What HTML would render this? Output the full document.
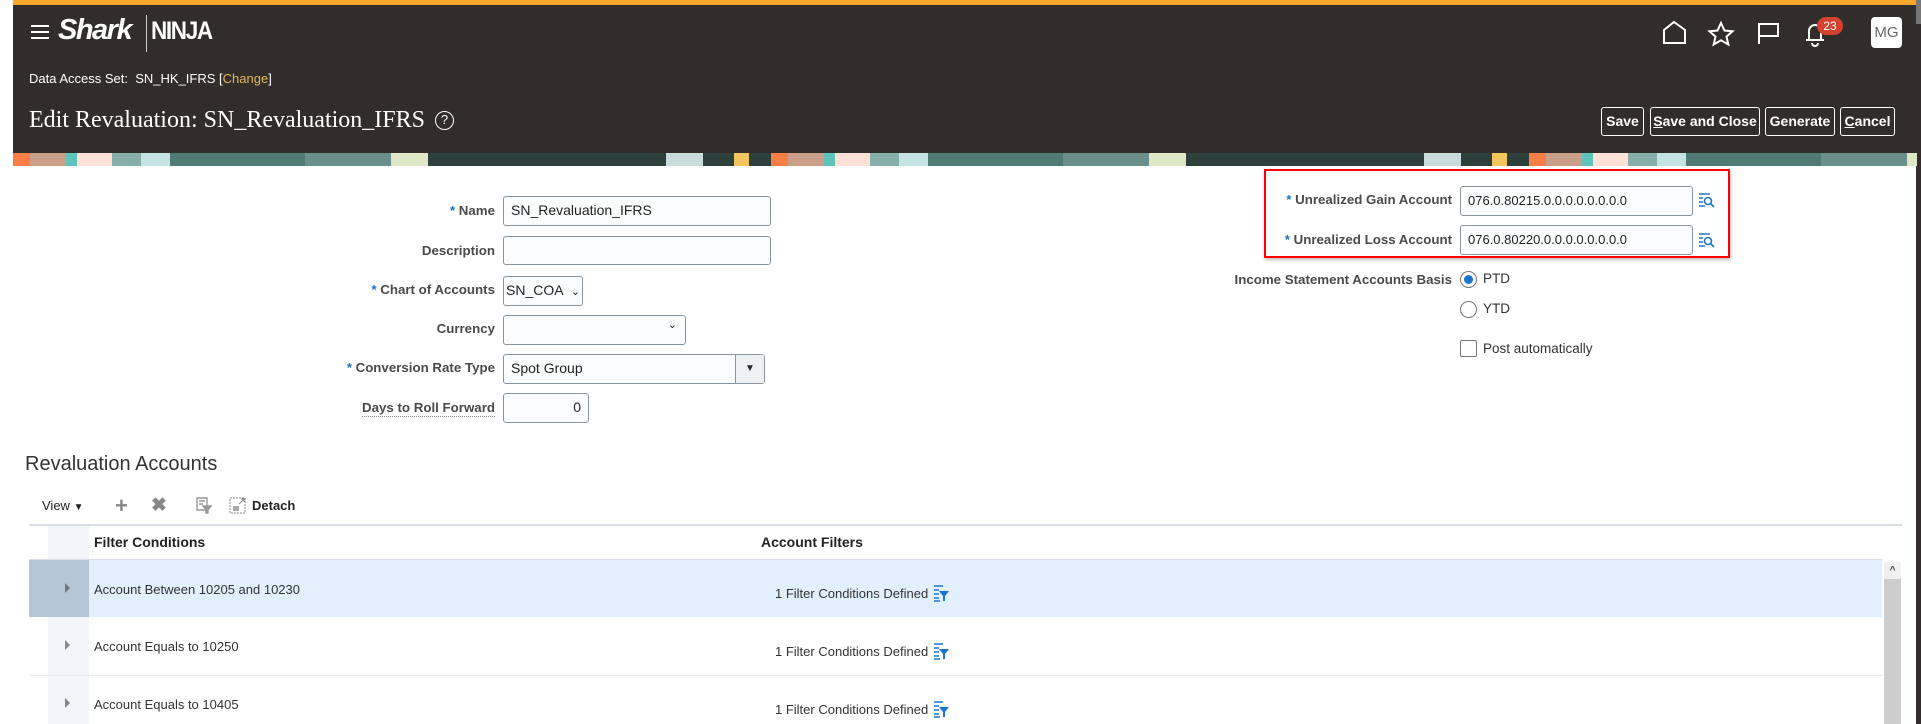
<!DOCTYPE html>
<html><head><meta charset="utf-8"><style>
*{box-sizing:border-box;margin:0;padding:0}
body{width:1921px;height:724px;overflow:hidden;background:#fff;position:relative;font-family:"Liberation Sans",Arial,sans-serif;color:#333}
.a{position:absolute}
.hdr{left:13px;top:0;width:1904px;height:153px;background:#312d2a;border-top:5px solid #f9a72b}
.rstrip{left:1916px;top:0;width:5px;height:724px;background:#312d2a}
.banner{left:13px;top:153px;width:1904px;height:13px;background:repeating-linear-gradient(90deg,#f77e45 0 17px,#c99f89 17px 53px,#5ec3bb 53px 64px,#fde0d6 64px 99px,#86aeaa 99px 128px,#c5e3e4 128px 157px,#4f7a76 157px 292px,#6b8f8a 292px 378px,#dde7c6 378px 415px,#2d403c 415px 653px,#c9dcdc 653px 690px,#2d403c 690px 721px,#f2c65c 721px 736px,#2d403c 736px 758px)}
.btn{top:107px;height:29px;border:1px solid #fff;border-radius:3px;color:#fff;font-weight:bold;font-size:14px;line-height:27px;text-align:center}
.lbl{font-size:13.3px;font-weight:bold;color:#4a4a4a;text-align:right;white-space:nowrap}
.req{color:#1b6dc1;font-size:13px;vertical-align:top}
.inp{border:1px solid #8795a2;border-radius:3px;background:#fbfcfe;font-size:14px;color:#222;padding-left:7px;line-height:27px}
.rt{font-size:13px;color:#333}
</style></head><body>
<div class="a hdr"></div>
<div class="a rstrip"></div>
<div class="a" style="left:1916px;top:0;width:5px;height:24px;background:#777"></div>
<div class="a" style="left:31px;top:25px;width:18px;height:2px;background:#fff;box-shadow:0 6px 0 #fff,0 12px 0 #fff"></div>
<div class="a" style="left:58px;top:14px;color:#fff;font-size:29px;font-weight:bold;font-style:italic;letter-spacing:-1.5px">Shark</div>
<div class="a" style="left:146px;top:15px;width:1px;height:37px;background:#ccc"></div>
<div class="a" style="left:151px;top:17px;color:#fff;font-size:25px;font-weight:bold;letter-spacing:-1.5px;transform:scaleX(0.9);transform-origin:left">NINJA</div>
<div class="a" style="left:29px;top:71px;color:#fff;font-size:13px">Data Access Set:&nbsp; SN_HK_IFRS [<span style="color:#e5b55b">Change</span>]</div>
<div class="a" style="left:29px;top:107px;color:#fff;font-size:24px;font-family:'Liberation Serif',serif">Edit Revaluation: SN_Revaluation_IFRS</div>
<div class="a" style="left:435px;top:111px;width:19px;height:19px;border:1.5px solid #fff;border-radius:50%;color:#fff;font-size:13px;text-align:center;line-height:16px">?</div>
<svg class="a" style="left:1660px;top:19px" width="260" height="32" viewBox="0 0 260 32" fill="none" stroke="#fff" stroke-width="2">
<path d="M4 24 V11 L14 3 L25 11 V24 Z"/>
<path d="M61 4 L64.5 11.5 L72.5 12.3 L66.5 17.6 L68.3 25.5 L61 21.3 L53.7 25.5 L55.5 17.6 L49.5 12.3 L57.5 11.5 Z"/>
<path d="M99 25 V5 H118 V17 H99"/>
<path d="M149 21 V12 A6 6 0 0 1 161 12 V21 H149 M146 21 H164 M152 24 A3 3 0 0 0 158 24"/>
</svg>
<div class="a" style="left:1817px;top:17px;width:26px;height:18px;background:#d4422f;border-radius:9px;color:#fff;font-size:12px;text-align:center;line-height:18px">23</div>
<div class="a" style="left:1871px;top:17px;width:31px;height:31px;background:#fff;border-radius:4px;color:#666;font-size:15px;text-align:center;line-height:31px">MG</div>
<div class="a btn" style="left:1601px;width:43px">Save</div>
<div class="a btn" style="left:1650px;width:110px"><u>S</u>ave and Close</div>
<div class="a btn" style="left:1765px;width:70px">Generate</div>
<div class="a btn" style="left:1840px;width:55px"><u>C</u>ancel</div>
<div class="a banner"></div>

<div class="a lbl" style="right:1426px;top:203px"><span class="req">*</span> Name</div>
<div class="a inp" style="left:503px;top:196px;width:268px;height:30px">SN_Revaluation_IFRS</div>
<div class="a lbl" style="right:1426px;top:243px">Description</div>
<div class="a inp" style="left:503px;top:236px;width:268px;height:29px"></div>
<div class="a lbl" style="right:1426px;top:282px"><span class="req">*</span> Chart of Accounts</div>
<div class="a inp" style="left:503px;top:276px;width:80px;height:30px;padding-left:2px">SN_COA <span style="font-size:11px;margin-left:4px">&#8964;</span></div>
<div class="a lbl" style="right:1426px;top:321px">Currency</div>
<div class="a inp" style="left:503px;top:315px;width:183px;height:30px"><span style="position:absolute;right:8px;top:-4px;font-size:11px">&#8964;</span></div>
<div class="a lbl" style="right:1426px;top:360px"><span class="req">*</span> Conversion Rate Type</div>
<div class="a inp" style="left:503px;top:354px;width:262px;height:30px">Spot Group<div class="a" style="right:0;top:0;width:29px;height:28px;border-left:1px solid #8795a2;background:#eef1f4;font-size:10px;text-align:center;line-height:28px;padding:0">&#9660;</div></div>
<div class="a lbl" style="right:1426px;top:400px;border-bottom:1px dotted #888;line-height:16px">Days to Roll Forward</div>
<div class="a inp" style="left:503px;top:393px;width:86px;height:30px;text-align:right;padding-right:7px">0</div>

<div class="a" style="left:1264px;top:169px;width:466px;height:89px;border:2px solid #f00;box-shadow:1px 2px 3px rgba(0,0,0,.25)"></div>
<div class="a lbl" style="right:469px;top:192px"><span class="req">*</span> Unrealized Gain Account</div>
<div class="a inp" style="left:1460px;top:186px;width:233px;height:30px;font-size:13px">076.0.80215.0.0.0.0.0.0.0.0</div>
<div class="a lbl" style="right:469px;top:232px"><span class="req">*</span> Unrealized Loss Account</div>
<div class="a inp" style="left:1460px;top:225px;width:233px;height:30px;font-size:13px">076.0.80220.0.0.0.0.0.0.0.0</div>
<svg class="a" style="left:1698px;top:192px" width="17" height="17" viewBox="0 0 17 17" fill="none" stroke="#1b75d0" stroke-width="1.6"><path d="M1 2h11M1 6h4M1 10h4M1 14h6"/><circle cx="10" cy="9" r="3.5"/><path d="M12.5 11.5 16 15"/></svg>
<svg class="a" style="left:1698px;top:232px" width="17" height="17" viewBox="0 0 17 17" fill="none" stroke="#1b75d0" stroke-width="1.6"><path d="M1 2h11M1 6h4M1 10h4M1 14h6"/><circle cx="10" cy="9" r="3.5"/><path d="M12.5 11.5 16 15"/></svg>
<div class="a lbl" style="right:469px;top:272px">Income Statement Accounts Basis</div>
<div class="a" style="left:1460px;top:271px;width:17px;height:17px;border:1px solid #777;border-radius:50%"></div>
<div class="a" style="left:1464px;top:275px;width:9px;height:9px;background:#1b75d0;border-radius:50%"></div>
<div class="a" style="left:1483px;top:271px;font-size:13.5px;color:#333">PTD</div>
<div class="a" style="left:1460px;top:301px;width:17px;height:17px;border:1px solid #777;border-radius:50%"></div>
<div class="a" style="left:1483px;top:301px;font-size:13.5px;color:#333">YTD</div>
<div class="a" style="left:1460px;top:340px;width:17px;height:17px;border:1px solid #777;border-radius:2px"></div>
<div class="a" style="left:1483px;top:341px;font-size:13.5px;color:#333">Post automatically</div>

<div class="a" style="left:25px;top:453px;font-size:20px;color:#333">Revaluation Accounts</div>
<div class="a" style="left:42px;top:498px;font-size:13px;color:#222">View <span style="font-size:10px">&#9660;</span></div>
<div class="a" style="left:115px;top:497px;font-size:22px;font-weight:bold;color:#888;line-height:18px">+</div>
<div class="a" style="left:151px;top:497px;font-size:19px;font-weight:bold;color:#888;line-height:18px">&#10006;</div>
<svg class="a" style="left:196px;top:497px" width="16" height="17" viewBox="0 0 16 17" fill="none" stroke="#999" stroke-width="1.4"><path d="M1 1h10v12H1zM3 4h6M3 7h4"/><path d="M7 9h8l-3 4v3h-2v-3z" fill="#999"/></svg>
<svg class="a" style="left:229px;top:497px" width="17" height="17" viewBox="0 0 17 17" fill="none" stroke="#888" stroke-width="1" stroke-dasharray="2 1"><rect x="1" y="1" width="15" height="15"/><rect x="4" y="9" width="6" height="5" fill="#aaa" stroke="none"/><path d="M10 7 15 2M12 2h3v3" stroke-dasharray="none"/></svg>
<div class="a" style="left:252px;top:498px;font-size:13px;font-weight:bold;color:#222">Detach</div>

<div class="a" style="left:29px;top:524px;width:1873px;height:2px;background:#d8dfe6"></div>
<div class="a" style="left:48px;top:526px;width:41px;height:198px;background:#f3f5f8"></div>
<div class="a" style="left:94px;top:534px;font-size:14px;font-weight:bold;color:#222">Filter Conditions</div>
<div class="a" style="left:761px;top:534px;font-size:14px;font-weight:bold;color:#222">Account Filters</div>
<div class="a" style="left:29px;top:559px;width:1853px;height:1px;background:#d8dfe6"></div>

<div class="a" style="left:29px;top:560px;width:1853px;height:57px;background:#e2f0fd"></div>
<div class="a" style="left:29px;top:560px;width:60px;height:57px;background:#b5c7d6"></div>
<div class="a" style="left:30px;top:675px;width:1852px;height:1px;background:#e6e8ea"></div>
<div class="a" style="left:65px;top:583px;width:0;height:0;border-left:5px solid #777;border-top:5px solid transparent;border-bottom:5px solid transparent"></div>
<div class="a" style="left:65px;top:640px;width:0;height:0;border-left:5px solid #888;border-top:5px solid transparent;border-bottom:5px solid transparent"></div>
<div class="a" style="left:65px;top:698px;width:0;height:0;border-left:5px solid #888;border-top:5px solid transparent;border-bottom:5px solid transparent"></div>
<div class="a rt" style="left:94px;top:582px">Account Between 10205 and 10230</div>
<div class="a rt" style="left:94px;top:639px">Account Equals to 10250</div>
<div class="a rt" style="left:94px;top:697px">Account Equals to 10405</div>
<div class="a rt" style="left:775px;top:586px">1 Filter Conditions Defined</div>
<div class="a rt" style="left:775px;top:644px">1 Filter Conditions Defined</div>
<div class="a rt" style="left:775px;top:702px">1 Filter Conditions Defined</div>
<svg class="a" style="left:933px;top:585px" width="17" height="17" viewBox="0 0 17 17"><path d="M1 1h9M1 5h5M1 9h5M1 13h5M1 16h6" stroke="#1b75d0" stroke-width="1.6" fill="none"/><path d="M6 6h10l-4 5v5h-2v-5z" fill="#1b75d0"/></svg>
<svg class="a" style="left:933px;top:643px" width="17" height="17" viewBox="0 0 17 17"><path d="M1 1h9M1 5h5M1 9h5M1 13h5M1 16h6" stroke="#1b75d0" stroke-width="1.6" fill="none"/><path d="M6 6h10l-4 5v5h-2v-5z" fill="#1b75d0"/></svg>
<svg class="a" style="left:933px;top:701px" width="17" height="17" viewBox="0 0 17 17"><path d="M1 1h9M1 5h5M1 9h5M1 13h5M1 16h6" stroke="#1b75d0" stroke-width="1.6" fill="none"/><path d="M6 6h10l-4 5v5h-2v-5z" fill="#1b75d0"/></svg>
<div class="a" style="left:1884px;top:562px;width:17px;height:162px;background:#cdcdcd"></div>
<div class="a" style="left:1884px;top:562px;width:17px;height:17px;background:#f0f0f0;font-size:10px;text-align:center;line-height:17px;color:#444;font-weight:bold">&#94;</div>
</body></html>
